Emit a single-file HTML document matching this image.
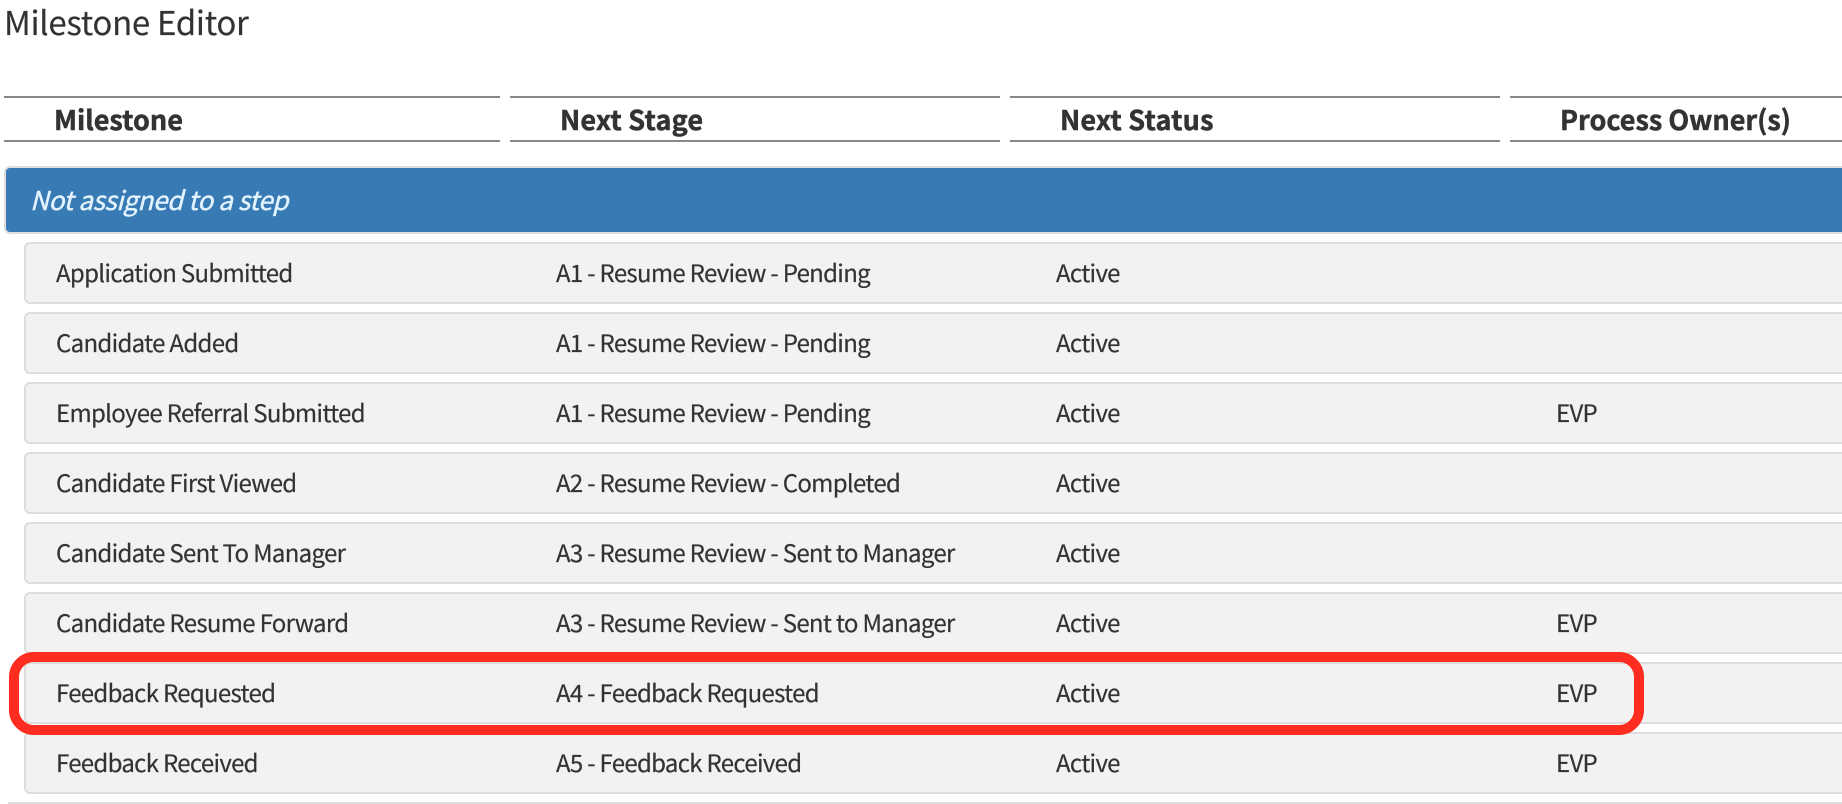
<!DOCTYPE html>
<html><head><meta charset="utf-8">
<style>
html,body{margin:0;padding:0;background:#fff;width:1842px;height:804px;overflow:hidden}
#w{position:relative;width:1842px;height:804px;overflow:hidden;font-family:"Noto Sans CJK SC","Liberation Sans",sans-serif;color:#333}
.a{position:absolute;white-space:nowrap}
.title{left:4px;top:-3px;font-size:33px;line-height:48px;letter-spacing:-.3px;-webkit-text-stroke:.15px #333}
.hc{position:absolute;top:96px;height:42px;border-top:2px solid #888;border-bottom:2px solid #888}
.ht{position:absolute;top:95px;font-size:27px;font-weight:700;line-height:47px;white-space:nowrap;-webkit-text-stroke:.5px #333}
.panel{position:absolute;left:4px;top:166px;width:1836px;height:64px;background:#377ab4;border:2px solid #ddd;border-right:none;border-radius:6px 0 0 6px}
.pt{position:absolute;left:30px;top:166px;font-size:26px;line-height:68px;font-style:italic;letter-spacing:-.35px;color:#e2f3fd;white-space:nowrap;-webkit-text-stroke:.45px #e2f3fd}
.row{position:absolute;left:24px;width:1816px;height:58px;background:#f2f2f2;border:2px solid #ddd;border-right:none;border-radius:6px 0 0 6px}
.t{position:absolute;margin-top:-1px;font-size:24px;line-height:62px;letter-spacing:-.69px;white-space:nowrap;-webkit-text-stroke:.2px #333}
.red{position:absolute;left:9px;top:652px;width:1615px;height:63px;border:10px solid #ff2d20;border-radius:25px}
.next{position:absolute;left:8px;top:802px;width:1834px;height:2px;background:#ddd}
</style></head><body>
<div id="w">
<div class="a title">Milestone Editor</div>

<div class="hc" style="left:4px;width:496px"></div>
<div class="hc" style="left:510px;width:490px"></div>
<div class="hc" style="left:1010px;width:490px"></div>
<div class="hc" style="left:1510px;width:332px"></div>
<div class="ht" style="left:54px">Milestone</div>
<div class="ht" style="left:560px;letter-spacing:.2px">Next Stage</div>
<div class="ht" style="left:1060px;letter-spacing:.2px">Next Status</div>
<div class="ht" style="left:1560px">Process Owner(s)</div>

<div class="panel"></div>
<div class="pt">Not assigned to a step</div>

<div class="row" style="top:242px"></div>
<div class="t" style="left:56px;top:242px">Application Submitted</div>
<div class="t" style="left:556px;top:242px">A1 - Resume Review - Pending</div>
<div class="t" style="left:1056px;top:242px">Active</div>

<div class="row" style="top:312px"></div>
<div class="t" style="left:56px;top:312px">Candidate Added</div>
<div class="t" style="left:556px;top:312px">A1 - Resume Review - Pending</div>
<div class="t" style="left:1056px;top:312px">Active</div>

<div class="row" style="top:382px"></div>
<div class="t" style="left:56px;top:382px">Employee Referral Submitted</div>
<div class="t" style="left:556px;top:382px">A1 - Resume Review - Pending</div>
<div class="t" style="left:1056px;top:382px">Active</div>
<div class="t" style="left:1556px;top:382px">EVP</div>

<div class="row" style="top:452px"></div>
<div class="t" style="left:56px;top:452px">Candidate First Viewed</div>
<div class="t" style="left:556px;top:452px">A2 - Resume Review - Completed</div>
<div class="t" style="left:1056px;top:452px">Active</div>

<div class="row" style="top:522px"></div>
<div class="t" style="left:56px;top:522px">Candidate Sent To Manager</div>
<div class="t" style="left:556px;top:522px">A3 - Resume Review - Sent to Manager</div>
<div class="t" style="left:1056px;top:522px">Active</div>

<div class="row" style="top:592px"></div>
<div class="t" style="left:56px;top:592px">Candidate Resume Forward</div>
<div class="t" style="left:556px;top:592px">A3 - Resume Review - Sent to Manager</div>
<div class="t" style="left:1056px;top:592px">Active</div>
<div class="t" style="left:1556px;top:592px">EVP</div>

<div class="row" style="top:662px"></div>
<div class="t" style="left:56px;top:662px">Feedback Requested</div>
<div class="t" style="left:556px;top:662px">A4 - Feedback Requested</div>
<div class="t" style="left:1056px;top:662px">Active</div>
<div class="t" style="left:1556px;top:662px">EVP</div>

<div class="row" style="top:732px"></div>
<div class="t" style="left:56px;top:732px">Feedback Received</div>
<div class="t" style="left:556px;top:732px">A5 - Feedback Received</div>
<div class="t" style="left:1056px;top:732px">Active</div>
<div class="t" style="left:1556px;top:732px">EVP</div>

<div class="next"></div>
<div class="red"></div>
</div>
</body></html>
